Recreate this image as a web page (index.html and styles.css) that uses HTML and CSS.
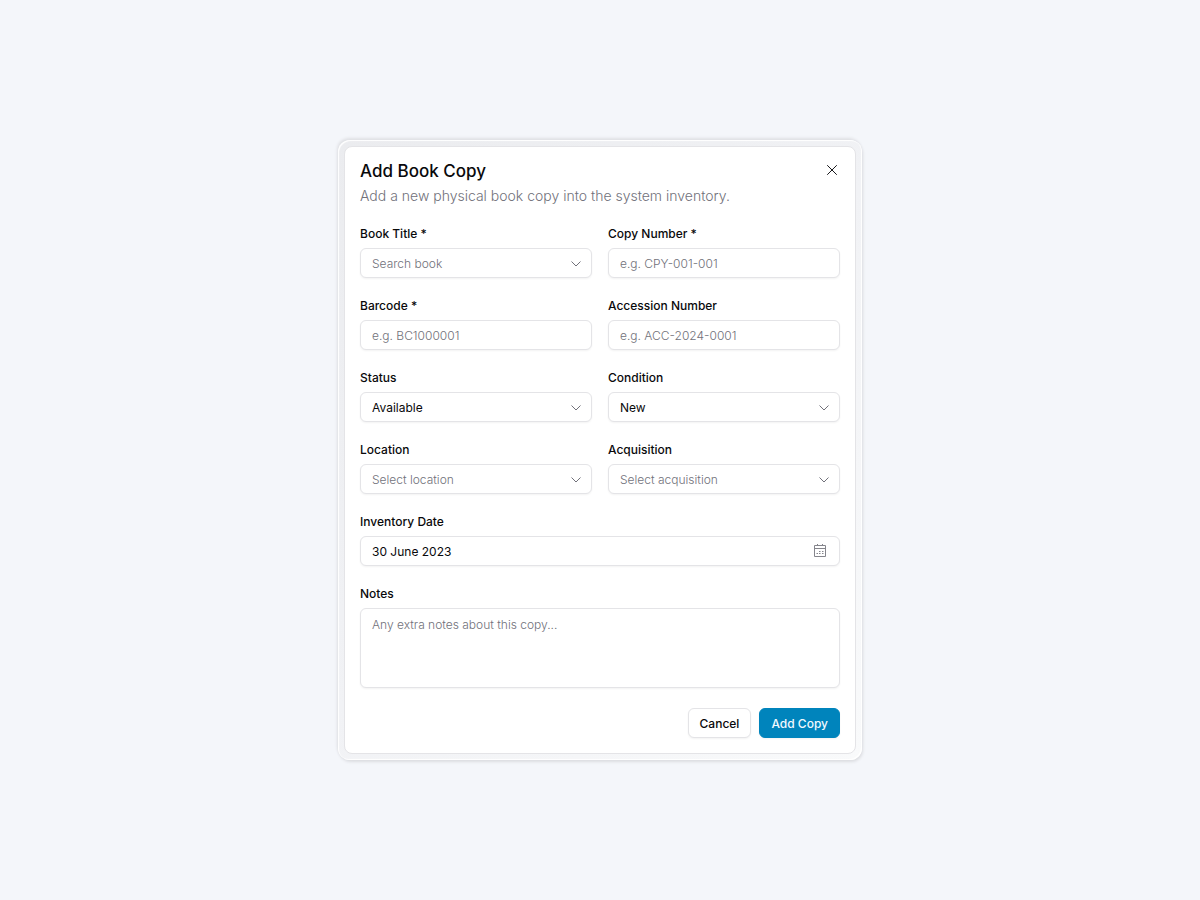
FILE: index.html
```html
<!DOCTYPE html>
<html lang="en">
<head>
<meta charset="utf-8">
<meta name="viewport" content="width=device-width, initial-scale=1">
<title>Add Book Copy</title>
<link rel="stylesheet" href="styles.css">
</head>
<body>
<main class="page">
  <div class="frame">
    <section class="dialog" role="dialog" aria-labelledby="dialog-title" aria-describedby="dialog-description">
      <header class="header">
        <div class="heading">
          <h1 class="title" id="dialog-title">Add Book Copy</h1>
          <p class="description" id="dialog-description">Add a new physical book copy into the system inventory.</p>
        </div>
        <button class="close" type="button" aria-label="Close">
          <svg width="16" height="16" viewBox="0 0 16 16" fill="none" stroke="currentColor" stroke-linecap="round"><path d="M3.5 3.500l9 9M12.500 3.500l-9 9"/></svg>
        </button>
      </header>
      <form class="form">
        <div class="fields">
          <div class="field">
            <label class="label" for="book">Book Title *</label>
            <div class="control-wrap">
              <select class="control select placeholder" id="book"><option>Search book</option></select>
              <svg class="chevron" viewBox="0 0 16 16"><path d="M3.500 5.500l4.500 4.500L12.500 5.500"/></svg>
            </div>
          </div>
          <div class="field">
            <label class="label" for="number">Copy Number *</label>
            <input class="control" id="number" type="text" placeholder="e.g. CPY-001-001">
          </div>
          <div class="field">
            <label class="label" for="barcode">Barcode *</label>
            <input class="control" id="barcode" type="text" placeholder="e.g. BC1000001">
          </div>
          <div class="field">
            <label class="label" for="accession">Accession Number</label>
            <input class="control" id="accession" type="text" placeholder="e.g. ACC-2024-0001">
          </div>
          <div class="field">
            <label class="label" for="status">Status</label>
            <div class="control-wrap">
              <select class="control select" id="status"><option>Available</option></select>
              <svg class="chevron" viewBox="0 0 16 16"><path d="M3.500 5.500l4.500 4.500L12.500 5.500"/></svg>
            </div>
          </div>
          <div class="field">
            <label class="label" for="condition">Condition</label>
            <div class="control-wrap">
              <select class="control select" id="condition"><option>New</option></select>
              <svg class="chevron" viewBox="0 0 16 16"><path d="M3.500 5.500l4.500 4.500L12.500 5.500"/></svg>
            </div>
          </div>
          <div class="field">
            <label class="label" for="location">Location</label>
            <div class="control-wrap">
              <select class="control select placeholder" id="location"><option>Select location</option></select>
              <svg class="chevron" viewBox="0 0 16 16"><path d="M3.500 5.500l4.500 4.500L12.500 5.500"/></svg>
            </div>
          </div>
          <div class="field">
            <label class="label" for="acquisition">Acquisition</label>
            <div class="control-wrap">
              <select class="control select placeholder" id="acquisition"><option>Select acquisition</option></select>
              <svg class="chevron" viewBox="0 0 16 16"><path d="M3.500 5.500l4.500 4.500L12.500 5.500"/></svg>
            </div>
          </div>
          <div class="field wide">
            <label class="label" for="date">Inventory Date</label>
            <div class="control-wrap">
              <input class="control" id="date" type="text" value="30 June 2023">
              <svg class="calendar" viewBox="0 0 14 14" fill="none" stroke="currentColor"><path d="M1.500 1.500h11v11h-11zM1.500 4.500h11M4.500 0v2M9.500 0v2"/><path d="M6 7.500h1.500M9 7.500h1.500M3.500 9.500h1.500M6 9.500h1.500M9 9.500h1.500"/></svg>
            </div>
          </div>
          <div class="field wide">
            <label class="label" for="notes">Notes</label>
            <textarea class="control notes" id="notes" placeholder="Any extra notes about this copy..."></textarea>
          </div>
        </div>
        <footer class="actions">
          <button class="button" type="button">Cancel</button>
          <button class="button primary" type="submit">Add Copy</button>
        </footer>
      </form>
    </section>
  </div>
</main>
</body>
</html>
```

FILE: styles.css
```css
* { box-sizing: border-box; }
body {
  margin: 0;
  background: #f4f6fa;
  color: #09090b;
  font: 12px/16px Inter, "Liberation Sans", sans-serif;
}
.page {
  min-height: 100vh;
  display: flex;
  align-items: center;
  justify-content: center;
}
.frame {
  width: 100%;
  max-width: 524px;
  padding: 6px;
  border-radius: 12px;
  background: linear-gradient(135deg, #ebecef 0%, #f1f2f5 50%, #f9fafb 100%);
  box-shadow: inset 1px 1px 1px #fff, inset -1px -1px 1px #fff, -1px -2px 3px #dfe0e4, 1px 2px 3px #dcdde1;
}
.dialog {
  padding: 15px;
  border: 1px solid #e4e4e7;
  border-radius: 8px;
  background: #fff;
}
.header {
  display: flex;
  justify-content: space-between;
  align-items: flex-start;
  margin-bottom: 20px;
}
.title {
  margin: 0;
  font-size: 17px;
  line-height: 18px;
  font-weight: 500;
}
.description {
  margin: 6px 0 0;
  font-size: 14px;
  line-height: 20px;
  font-weight: 300;
  color: #71717a;
}
.close {
  display: flex;
  padding: 0;
  border: 0;
  background: none;
  color: #18181b;
}
.fields {
  display: grid;
  grid-template-columns: 1fr 1fr;
  gap: 20px 16px;
}
.field {
  display: flex;
  flex-direction: column;
  gap: 6px;
  min-width: 0;
}
.wide { grid-column: 1 / -1; }
.label { font-weight: 450; }
.control-wrap { position: relative; }
.control {
  display: block;
  width: 100%;
  height: 30px;
  margin: 0;
  padding: 0 11px;
  border: 1px solid #e4e4e7;
  border-radius: 6px;
  background: #fff;
  color: #09090b;
  font: inherit;
  box-shadow: 0 1px 2px rgba(0, 0, 0, 0.05);
}
.select {
  appearance: none;
  padding-top: 2px;
}
.placeholder {
  color: #71717a;
  font-weight: 300;
}
.control::placeholder {
  color: #71717a;
  font-weight: 300;
  opacity: 1;
}
.notes {
  height: 80px;
  padding-top: 8px;
  resize: none;
}
.chevron {
  position: absolute;
  top: 8px;
  right: 8px;
  width: 16px;
  height: 16px;
  fill: none;
  stroke: #71717a;
  pointer-events: none;
}
.calendar {
  position: absolute;
  top: 8px;
  right: 13px;
  width: 14px;
  height: 14px;
  color: #85858c;
  pointer-events: none;
}
.actions {
  display: flex;
  justify-content: flex-end;
  gap: 8px;
  margin-top: 20px;
}
.button {
  height: 30px;
  padding: 1px 11px 0;
  border: 1px solid #e4e4e7;
  border-radius: 6px;
  background: #fff;
  color: #09090b;
  font: inherit;
  font-weight: 500;
  box-shadow: 0 1px 2px rgba(0, 0, 0, 0.05);
}
.primary {
  border-color: #0084bc;
  background: #0084bc;
  color: #f0f9ff;
}
```
